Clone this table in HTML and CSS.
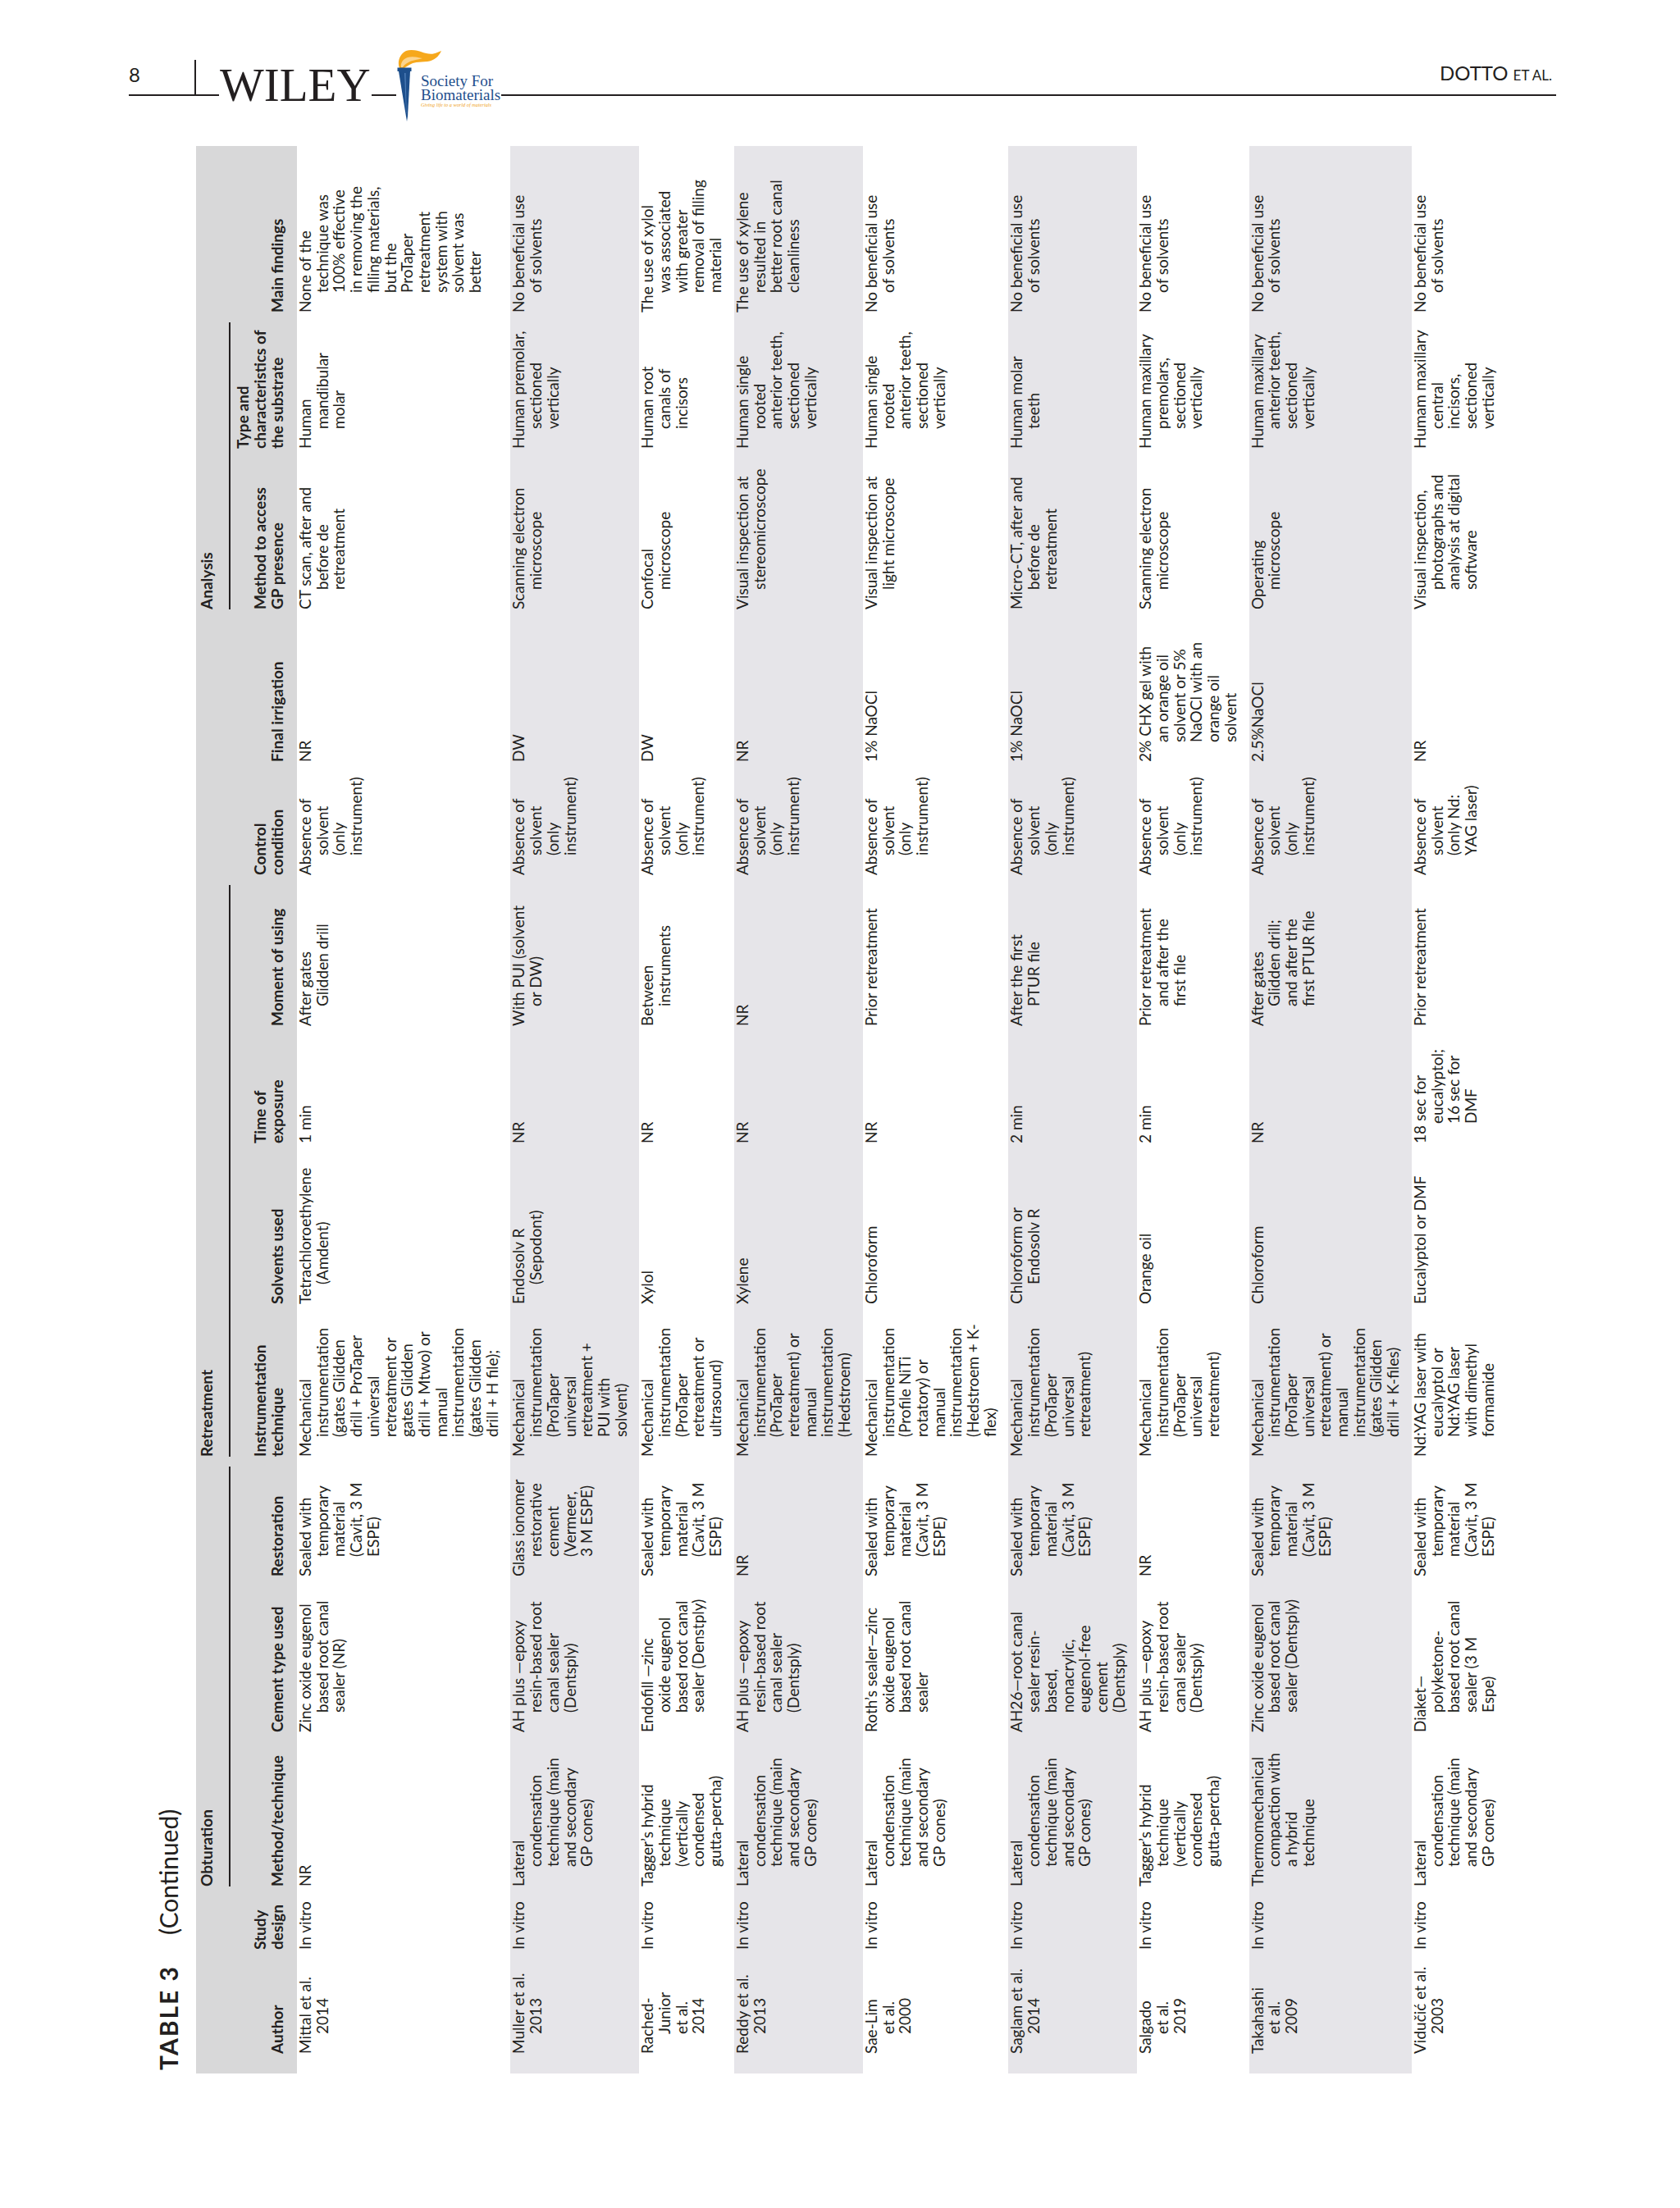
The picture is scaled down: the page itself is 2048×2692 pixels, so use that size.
FILE: index.html
```html
<!DOCTYPE html>
<html lang="en">
<head>
<meta charset="utf-8">
<title>Table 3 (Continued)</title>
<link rel="stylesheet" href="styles.css">
</head>
<body>
<div class="page">
  <header class="runhead">
    <div class="lead"><span class="folio">8</span><span class="tick"></span></div>
    <div class="wiley">WILEY</div>
    <div class="seg"></div>
    <svg class="torch" viewBox="0 0 30 88" width="30" height="88" aria-hidden="true">
      <path d="M4,23 C1,16 4,6 12,2 C17,0 24,1 30,3 C38,6 44,7 50,4 L55,2 C52,9 46,14 38,15 C30,16 24,15 18,18 C14,20 11,22 10,23 Z" fill="#f6a81c"/>
      <path d="M6,22 C5,17 8,12 14,10 C20,8 26,10 32,11 C26,13 20,13 15,16 C11,18 9,20 8,22 Z" fill="#fcd48e"/>
      <rect x="1.5" y="22.5" width="17" height="4.5" fill="#1d4f8c"/>
      <path d="M3,27 L17,27 L14,82 L13,88 L12,82 Z" fill="#1d4f8c"/>
      <path d="M10,29 L11.5,29 L12.6,78 L12.2,78 Z" fill="#4f7fb8"/>
    </svg>
    <div class="sfb">
      <div class="sfb-name">Society For</div>
      <div class="sfb-name">Biomaterials</div>
      <div class="sfb-tag">Giving life to a world of materials</div>
    </div>
    <div class="tail"><span class="authors">DOTTO <span class="sc">ET AL.</span></span></div>
  </header>

  <div class="sheet">
    <div class="rot">
      <div class="caption"><span class="tlabel">TABLE 3</span><span class="tcont">(Continued)</span></div>
      <table class="data">
        <colgroup>
          <col class="w-author"><col class="w-design"><col class="w-method"><col class="w-cement"><col class="w-resto">
          <col class="w-instr"><col class="w-solv"><col class="w-time"><col class="w-moment"><col class="w-control">
          <col class="w-irrig"><col class="w-access"><col class="w-type"><col class="w-find">
        </colgroup>
        <thead>
          <tr>
            <th rowspan="2" class="first">Author</th>
            <th rowspan="2">Study<br>design</th>
            <th colspan="3" class="span"><div class="spanlbl">Obturation</div></th>
            <th colspan="4" class="span"><div class="spanlbl">Retreatment</div></th>
            <th rowspan="2">Control<br>condition</th>
            <th rowspan="2">Final irrigation</th>
            <th colspan="2" class="span"><div class="spanlbl">Analysis</div></th>
            <th rowspan="2">Main findings</th>
          </tr>
          <tr>
            <th>Method/technique</th>
            <th>Cement type used</th>
            <th>Restoration</th>
            <th>Instrumentation<br>technique</th>
            <th>Solvents used</th>
            <th>Time of<br>exposure</th>
            <th>Moment of using</th>
            <th>Method to access<br>GP presence</th>
            <th>Type and<br>characteristics of<br>the substrate</th>
          </tr>
        </thead>
        <tbody>
          <tr>
            <td class="first">Mittal et al.<br>2014</td>
            <td>In vitro</td>
            <td>NR</td>
            <td>Zinc oxide eugenol<br>based root canal<br>sealer (NR)</td>
            <td>Sealed with<br>temporary<br>material<br>(Cavit, 3 M<br>ESPE)</td>
            <td>Mechanical<br>instrumentation<br>(gates Glidden<br>drill + ProTaper<br>universal<br>retreatment or<br>gates Glidden<br>drill + Mtwo) or<br>manual<br>instrumentation<br>(gates Glidden<br>drill + H file);</td>
            <td>Tetrachloroethylene<br>(Amdent)</td>
            <td>1 min</td>
            <td>After gates<br>Glidden drill</td>
            <td>Absence of<br>solvent<br>(only<br>instrument)</td>
            <td>NR</td>
            <td>CT scan, after and<br>before de<br>retreatment</td>
            <td>Human<br>mandibular<br>molar</td>
            <td>None of the<br>technique was<br>100% effective<br>in removing the<br>filling materials,<br>but the<br>ProTaper<br>retreatment<br>system with<br>solvent was<br>better</td>
          </tr>
          <tr class="alt">
            <td class="first">Muller et al.<br>2013</td>
            <td>In vitro</td>
            <td>Lateral<br>condensation<br>technique (main<br>and secondary<br>GP cones)</td>
            <td>AH plus —epoxy<br>resin-based root<br>canal sealer<br>(Dentsply)</td>
            <td>Glass ionomer<br>restorative<br>cement<br>(Vermeer,<br>3 M ESPE)</td>
            <td>Mechanical<br>instrumentation<br>(ProTaper<br>universal<br>retreatment +<br>PUI with<br>solvent)</td>
            <td>Endosolv R<br>(Sepodont)</td>
            <td>NR</td>
            <td>With PUI (solvent<br>or DW)</td>
            <td>Absence of<br>solvent<br>(only<br>instrument)</td>
            <td>DW</td>
            <td>Scanning electron<br>microscope</td>
            <td>Human premolar,<br>sectioned<br>vertically</td>
            <td>No beneficial use<br>of solvents</td>
          </tr>
          <tr>
            <td class="first">Rached-<br>Junior<br>et al.<br>2014</td>
            <td>In vitro</td>
            <td>Tagger’s hybrid<br>technique<br>(vertically<br>condensed<br>gutta-percha)</td>
            <td>Endofill —zinc<br>oxide eugenol<br>based root canal<br>sealer (Denstply)</td>
            <td>Sealed with<br>temporary<br>material<br>(Cavit, 3 M<br>ESPE)</td>
            <td>Mechanical<br>instrumentation<br>(ProTaper<br>retreatment or<br>ultrasound)</td>
            <td>Xylol</td>
            <td>NR</td>
            <td>Between<br>instruments</td>
            <td>Absence of<br>solvent<br>(only<br>instrument)</td>
            <td>DW</td>
            <td>Confocal<br>microscope</td>
            <td>Human root<br>canals of<br>incisors</td>
            <td>The use of xylol<br>was associated<br>with greater<br>removal of filling<br>material</td>
          </tr>
          <tr class="alt">
            <td class="first">Reddy et al.<br>2013</td>
            <td>In vitro</td>
            <td>Lateral<br>condensation<br>technique (main<br>and secondary<br>GP cones)</td>
            <td>AH plus —epoxy<br>resin-based root<br>canal sealer<br>(Dentsply)</td>
            <td>NR</td>
            <td>Mechanical<br>instrumentation<br>(ProTaper<br>retreatment) or<br>manual<br>instrumentation<br>(Hedstroem)</td>
            <td>Xylene</td>
            <td>NR</td>
            <td>NR</td>
            <td>Absence of<br>solvent<br>(only<br>instrument)</td>
            <td>NR</td>
            <td>Visual inspection at<br>stereomicroscope</td>
            <td>Human single<br>rooted<br>anterior teeth,<br>sectioned<br>vertically</td>
            <td>The use of xylene<br>resulted in<br>better root canal<br>cleanliness</td>
          </tr>
          <tr>
            <td class="first">Sae-Lim<br>et al.<br>2000</td>
            <td>In vitro</td>
            <td>Lateral<br>condensation<br>technique (main<br>and secondary<br>GP cones)</td>
            <td>Roth’s sealer—zinc<br>oxide eugenol<br>based root canal<br>sealer</td>
            <td>Sealed with<br>temporary<br>material<br>(Cavit, 3 M<br>ESPE)</td>
            <td>Mechanical<br>instrumentation<br>(Profile NiTi<br>rotatory) or<br>manual<br>instrumentation<br>(Hedstroem + K-<br>flex)</td>
            <td>Chloroform</td>
            <td>NR</td>
            <td>Prior retreatment</td>
            <td>Absence of<br>solvent<br>(only<br>instrument)</td>
            <td>1% NaOCl</td>
            <td>Visual inspection at<br>light microscope</td>
            <td>Human single<br>rooted<br>anterior teeth,<br>sectioned<br>vertically</td>
            <td>No beneficial use<br>of solvents</td>
          </tr>
          <tr class="alt">
            <td class="first">Saglam et al.<br>2014</td>
            <td>In vitro</td>
            <td>Lateral<br>condensation<br>technique (main<br>and secondary<br>GP cones)</td>
            <td>AH26—root canal<br>sealer resin-<br>based,<br>nonacrylic,<br>eugenol-free<br>cement<br>(Dentsply)</td>
            <td>Sealed with<br>temporary<br>material<br>(Cavit, 3 M<br>ESPE)</td>
            <td>Mechanical<br>instrumentation<br>(ProTaper<br>universal<br>retreatment)</td>
            <td>Chloroform or<br>Endosolv R</td>
            <td>2 min</td>
            <td>After the first<br>PTUR file</td>
            <td>Absence of<br>solvent<br>(only<br>instrument)</td>
            <td>1% NaOCl</td>
            <td>Micro-CT, after and<br>before de<br>retreatment</td>
            <td>Human molar<br>teeth</td>
            <td>No beneficial use<br>of solvents</td>
          </tr>
          <tr>
            <td class="first">Salgado<br>et al.<br>2019</td>
            <td>In vitro</td>
            <td>Tagger’s hybrid<br>technique<br>(vertically<br>condensed<br>gutta-percha)</td>
            <td>AH plus —epoxy<br>resin-based root<br>canal sealer<br>(Dentsply)</td>
            <td>NR</td>
            <td>Mechanical<br>instrumentation<br>(ProTaper<br>universal<br>retreatment)</td>
            <td>Orange oil</td>
            <td>2 min</td>
            <td>Prior retreatment<br>and after the<br>first file</td>
            <td>Absence of<br>solvent<br>(only<br>instrument)</td>
            <td>2% CHX gel with<br>an orange oil<br>solvent or 5%<br>NaOCl with an<br>orange oil<br>solvent</td>
            <td>Scanning electron<br>microscope</td>
            <td>Human maxillary<br>premolars,<br>sectioned<br>vertically</td>
            <td>No beneficial use<br>of solvents</td>
          </tr>
          <tr class="alt">
            <td class="first">Takahashi<br>et al.<br>2009</td>
            <td>In vitro</td>
            <td>Thermomechanical<br>compaction with<br>a hybrid<br>technique</td>
            <td>Zinc oxide eugenol<br>based root canal<br>sealer (Dentsply)</td>
            <td>Sealed with<br>temporary<br>material<br>(Cavit, 3 M<br>ESPE)</td>
            <td>Mechanical<br>instrumentation<br>(ProTaper<br>universal<br>retreatment) or<br>manual<br>instrumentation<br>(gates Glidden<br>drill + K-files)</td>
            <td>Chloroform</td>
            <td>NR</td>
            <td>After gates<br>Glidden drill;<br>and after the<br>first PTUR file</td>
            <td>Absence of<br>solvent<br>(only<br>instrument)</td>
            <td>2.5%NaOCl</td>
            <td>Operating<br>microscope</td>
            <td>Human maxillary<br>anterior teeth,<br>sectioned<br>vertically</td>
            <td>No beneficial use<br>of solvents</td>
          </tr>
          <tr>
            <td class="first">Vidučić et al.<br>2003</td>
            <td>In vitro</td>
            <td>Lateral<br>condensation<br>technique (main<br>and secondary<br>GP cones)</td>
            <td>Diaket—<br>polyketone-<br>based root canal<br>sealer (3 M<br>Espe)</td>
            <td>Sealed with<br>temporary<br>material<br>(Cavit, 3 M<br>ESPE)</td>
            <td>Nd:YAG laser with<br>eucalyptol or<br>Nd:YAG laser<br>with dimethyl<br>formamide</td>
            <td>Eucalyptol or DMF</td>
            <td>18 sec for<br>eucalyptol;<br>16 sec for<br>DMF</td>
            <td>Prior retreatment</td>
            <td>Absence of<br>solvent<br>(only Nd:<br>YAG laser)</td>
            <td>NR</td>
            <td>Visual inspection,<br>photographs and<br>analysis at digital<br>software</td>
            <td>Humam maxillary<br>central<br>incisors,<br>sectioned<br>vertically</td>
            <td>No beneficial use<br>of solvents</td>
          </tr>
        </tbody>
      </table>
    </div>
  </div>
</div>
</body>
</html>
```

FILE: styles.css
```css
* { box-sizing: border-box; }

html, body {
  margin: 0;
  padding: 0;
  background: #ffffff;
}

body {
  font-family: Lato, "Liberation Sans", sans-serif;
  color: #231f20;
}

.page {
  width: 2048px;
  height: 2692px;
  padding: 58px 0 0 157px;
  overflow: hidden;
}

/* ---------- running head ---------- */
.runhead {
  display: flex;
  align-items: flex-end;
  width: 1740px;
  height: 90px;
}

.lead {
  width: 110px;
  height: 44px;
  margin-bottom: 31px;
  display: flex;
  justify-content: space-between;
  align-items: flex-start;
  border-bottom: 2.5px solid #231f20;
}

.folio {
  font-size: 24px;
  line-height: 24px;
  margin-top: 5.7px;
}

.tick {
  align-self: stretch;
  width: 2px;
  background: #231f20;
  margin-right: 28px;
}

.wiley {
  width: 185px;
  font-family: "Liberation Serif", "DejaVu Serif", serif;
  font-size: 57px;
  line-height: 57px;
  margin-bottom: 15.7px;
  margin-left: 1px;
  color: #231f20;
}

.seg {
  width: 30px;
  margin-bottom: 31px;
  border-bottom: 2.5px solid #231f20;
}

.torch {
  display: block;
  flex: none;
  overflow: visible;
}

.sfb {
  width: 98px;
  margin-bottom: 15.9px;
  font-family: "Liberation Serif", "DejaVu Serif", serif;
  position: relative;
}

.sfb-name {
  font-size: 19px;
  line-height: 17px;
  color: #1f4f8d;
  white-space: nowrap;
}

.sfb-tag {
  font-size: 6.3px;
  line-height: 8px;
  font-style: italic;
  color: #ef9f1c;
  white-space: nowrap;
}

.tail {
  flex: 1;
  height: 60px;
  margin-bottom: 31px;
  border-bottom: 2.5px solid #231f20;
  display: flex;
  justify-content: flex-end;
  align-items: flex-end;
  padding-right: 5px;
  padding-bottom: 10.8px;
}

.authors {
  font-size: 24px;
  line-height: 24px;
  white-space: nowrap;
}

.authors .sc {
  font-size: 17px;
}

/* ---------- rotated table sheet ---------- */
.sheet {
  position: relative;
  margin: 30px 0 0 33px;
  width: 1707px;
  height: 2350px;
}

.rot {
  position: absolute;
  left: 0;
  top: 2350px;
  width: 2350px;
  transform-origin: 0 0;
  transform: rotate(-90deg);
}

.caption {
  height: 49px;
  padding-left: 4px;
  font-size: 30px;
  line-height: 30px;
  white-space: nowrap;
}

.tlabel {
  font-weight: 700;
  letter-spacing: 2px;
}

.tcont {
  margin-left: 37px;
}

.data {
  width: 2350px;
  table-layout: fixed;
  border-collapse: collapse;
  border-spacing: 0;
  font-size: 19px;
}

.w-author { width: 151px; }
.w-design { width: 77px; }
.w-method { width: 188px; }
.w-cement { width: 190px; }
.w-resto { width: 146px; }
.w-instr { width: 186px; }
.w-solv { width: 196px; }
.w-time { width: 143px; }
.w-moment { width: 184px; }
.w-control { width: 138px; }
.w-irrig { width: 186px; }
.w-access { width: 196px; }
.w-type { width: 166px; }
.w-find { width: 203px; }

.data thead {
  background: #d8d8d9;
}

.data th {
  font-weight: 700;
  text-align: left;
  vertical-align: bottom;
  line-height: 21px;
  padding: 4px 6px 14px 0;
  white-space: nowrap;
}

.data th.first {
  padding-left: 24px;
}

.data th.span {
  padding: 2px 12px 0 0;
  vertical-align: top;
}

.spanlbl {
  padding-bottom: 17px;
  border-bottom: 2px solid #231f20;
}

.data td {
  vertical-align: top;
  line-height: 20.7px;
  padding: 0 6px 12px 24px;
  text-indent: -24px;
  white-space: nowrap;
}

.data td.first {
  padding-left: 48px;
}

.data tr.alt td {
  background: #e6e5e9;
}
```
